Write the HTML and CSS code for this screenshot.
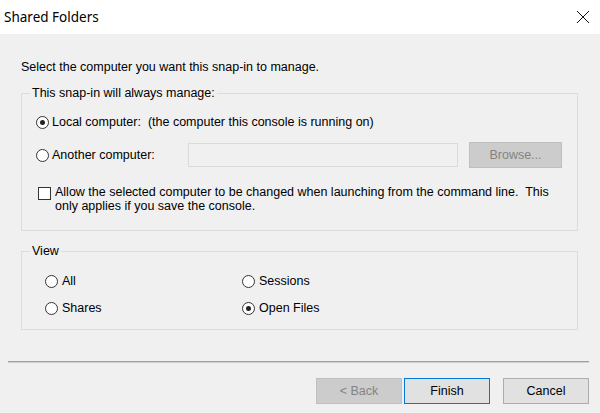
FILE: index.html
```html
<!DOCTYPE html>
<html lang="en">
<head>
    <meta charset="UTF-8">
    <meta name="viewport" content="width=device-width, initial-scale=1.0">
    <title>Shared Folders</title>
    <link rel="stylesheet" href="styles.css">
</head>
<body>
    <div class="window">
        <div class="titlebar">
            <span class="title">Shared Folders</span>
            <svg class="close" width="14" height="14" viewBox="0 0 14 14">
                <path d="M1 1 L13 13 M13 1 L1 13" stroke="#111" stroke-width="1" fill="none"/>
            </svg>
        </div>

        <div class="content">
            <p class="intro">Select the computer you want this snap-in to manage.</p>

            <fieldset class="group manage">
                <legend>This snap-in will always manage:</legend>
                <div class="row first">
                    <span class="radio checked"></span>
                    <span>Local computer:&nbsp; (the computer this console is running on)</span>
                </div>
                <div class="row second">
                    <span class="radio"></span>
                    <span class="label-another">Another computer:</span>
                    <span class="textbox"></span>
                    <span class="btn disabled browse">Browse...</span>
                </div>
                <div class="row check">
                    <span class="checkbox"></span>
                    <span class="check-text">Allow the selected computer to be changed when launching from the command line.&nbsp; This only applies if you save the console.</span>
                </div>
            </fieldset>

            <fieldset class="group view">
                <legend>View</legend>
                <div class="view-grid">
                    <div class="row"><span class="radio"></span><span>All</span></div>
                    <div class="row"><span class="radio"></span><span>Sessions</span></div>
                    <div class="row"><span class="radio"></span><span>Shares</span></div>
                    <div class="row"><span class="radio checked"></span><span>Open Files</span></div>
                </div>
            </fieldset>
        </div>

        <div class="footer">
            <div class="separator"></div>
            <div class="buttons">
                <span class="btn disabled">&lt; Back</span>
                <span class="btn default">Finish</span>
                <span class="btn cancel">Cancel</span>
            </div>
        </div>
    </div>
</body>
</html>
```

FILE: styles.css
```css
html, body { margin: 0; padding: 0; }
body { background: #f0f0f0; font-family: "Liberation Sans", Arial, sans-serif; font-size: 12.5px; color: #000; }
.window { width: 600px; height: 413px; background: #f0f0f0; }

.titlebar { height: 34px; background: #fff; display: flex; align-items: center; justify-content: space-between; padding: 0 10px 0 4px; box-sizing: border-box; }
.title { font-family: "Noto Sans", sans-serif; font-size: 13.5px; }
.close { display: block; }

.content { padding: 0 22px 0 21px; }
.intro { margin: 0; padding-top: 26px; line-height: 15px; }

.group { margin: 0; border: 1px solid #dcdcdc; padding: 0; }
.group legend { padding: 0 2px; margin-left: 8px; line-height: 15px; }
.manage { margin-top: 11px; padding-bottom: 17px; }
.view { margin-top: 13px; padding-bottom: 11px; }

.row { display: flex; align-items: center; }
.manage .row { padding-left: 14px; }
.manage .first { margin-top: 9px; height: 24px; }
.manage .second { margin-top: 8px; height: 26px; }
.manage .check { margin-top: 17px; align-items: flex-start; padding-left: 16px; }

.radio { width: 11px; height: 11px; border: 1px solid #333; border-radius: 50%; background: #fff; margin-right: 3px; position: relative; flex: none; }
.radio.checked::after { content: ""; position: absolute; left: 3px; top: 3px; width: 5px; height: 5px; border-radius: 50%; background: #222; }

.label-another { width: 136px; }
.textbox { width: 268px; height: 22px; border: 1px solid #dadada; background: #f0f0f0; }

.btn { display: flex; align-items: center; justify-content: center; width: 84px; height: 24px; border: 1px solid #adadad; background: #e1e1e1; color: #000; }
.btn.disabled { background: #cccccc; border-color: #bfbfbf; color: #838383; }
.btn.default { border-color: #0078d7; }
.browse { width: 91px; margin-left: 11px; }

.checkbox { width: 11px; height: 11px; border: 1px solid #333; background: #fff; margin-top: 2px; margin-right: 4px; flex: none; }
.check-text { width: 505px; line-height: 14px; }

.view-grid { display: grid; grid-template-columns: 197px 1fr; row-gap: 7px; margin-top: 12px; padding-left: 23px; }
.view-grid .row { height: 20px; }
.view-grid .radio { margin-right: 4px; }

.footer { padding: 0 11px 0 8px; }
.separator { margin-top: 31px; height: 1px; border-top: 1px solid #a0a0a0; background: #d0d0d0; }
.buttons { display: flex; justify-content: flex-end; margin-top: 15px; }
.buttons .btn + .btn { margin-left: 2px; }
.buttons .cancel { margin-left: 13px !important; }
```
